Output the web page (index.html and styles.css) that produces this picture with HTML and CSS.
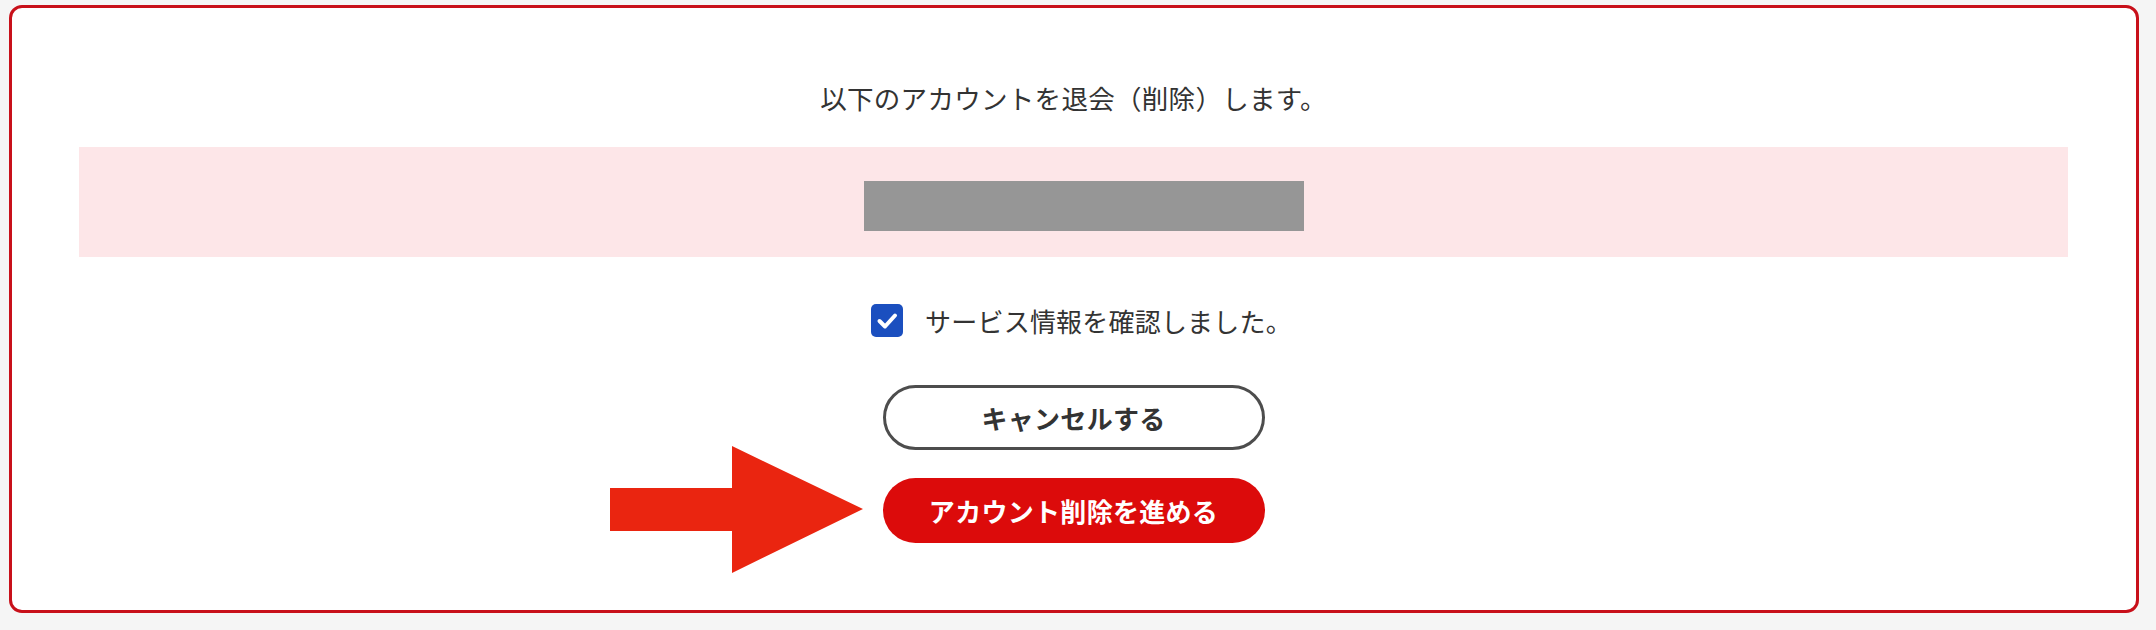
FILE: index.html
```html
<!DOCTYPE html>
<html lang="ja">
<head>
    <meta charset="UTF-8">
    <title>アカウント退会</title>
    <link rel="stylesheet" href="styles.css">
</head>
<body>
    <div class="withdraw-box">
        <p class="lead">以下のアカウントを退会（削除）します。</p>
        <div class="account-band">
            <div class="account-mask"></div>
        </div>
        <label class="confirm">
            <span class="check">
                <svg width="32" height="33" viewBox="0 0 32 33">
                    <path d="M8.5 17 L14 22.5 L24 11.5" fill="none" stroke="#fff" stroke-width="4" stroke-linecap="round" stroke-linejoin="round"/>
                </svg>
            </span>
            <span>サービス情報を確認しました。</span>
        </label>
        <div class="actions">
            <button class="btn btn-cancel" type="button">キャンセルする</button>
            <div class="proceed-wrap">
                <svg class="arrow" width="253" height="127" viewBox="0 0 253 127">
                    <polygon points="0,42 122,42 122,0 253,63 122,127 122,85 0,85" fill="#ea2510"/>
                </svg>
                <button class="btn btn-proceed" type="button">アカウント削除を進める</button>
            </div>
        </div>
    </div>
</body>
</html>
```

FILE: styles.css
```css
body {
    margin: 5px 17px 17px 9px;
    background: #f5f5f5;
    font-family: "Noto Sans CJK JP", "Noto Sans", sans-serif;
    color: #333;
}
.withdraw-box {
    background: #fff;
    border: 3px solid #c8101a;
    border-radius: 13px;
    padding: 70px 68px 67px 67px;
    height: 608px;
    box-sizing: border-box;
}
.lead {
    margin: 0;
    text-align: center;
    font-size: 26.5px;
    letter-spacing: 0.3px;
    line-height: 39px;
}
.account-band {
    margin-top: 30px;
    background: #fde6e8;
    height: 110px;
    box-sizing: border-box;
    padding: 34px 0 0 21px;
}
.account-mask {
    width: 440px;
    height: 50px;
    margin: 0 auto;
    background: #969696;
}
.confirm {
    display: flex;
    justify-content: center;
    align-items: center;
    gap: 22px;
    margin-top: 44px;
    padding-left: 16px;
    font-size: 26px;
    letter-spacing: 0.2px;
    line-height: 39px;
}
.check {
    display: flex;
    width: 32px;
    height: 33px;
    border-radius: 5px;
    background: #1b4fbf;
}
.actions {
    display: flex;
    flex-direction: column;
    align-items: center;
    gap: 28px;
    margin-top: 45px;
}
.btn {
    width: 382px;
    height: 65px;
    border-radius: 33px;
    font-family: inherit;
    font-size: 26px;
    font-weight: 700;
    letter-spacing: 0.3px;
    cursor: pointer;
}
.btn-cancel {
    background: #fff;
    border: 3px solid #4d4d4d;
    color: #333;
}
.btn-proceed {
    background: #dc0b0b;
    border: none;
    color: #fff;
}
.proceed-wrap {
    position: relative;
    display: flex;
}
.arrow {
    position: absolute;
    top: -32px;
    right: calc(100% + 20px);
}
```
